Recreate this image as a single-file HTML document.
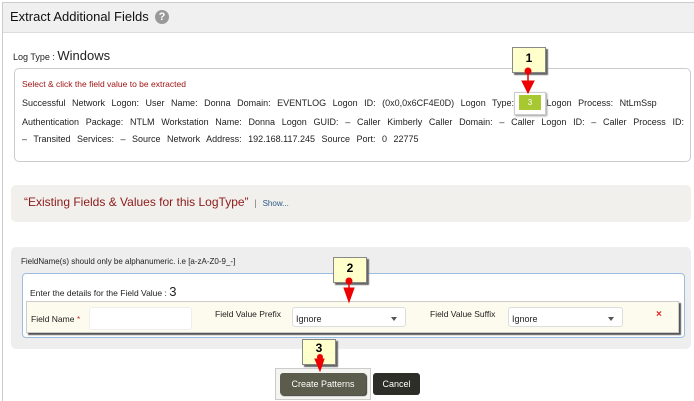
<!DOCTYPE html>
<html><head><style>
body{margin:0;width:694px;height:400px;background:#fff;font-family:"Liberation Sans",sans-serif;position:relative;overflow:hidden;font-size:9px;color:#222}
.a{position:absolute}
.call{position:absolute;width:32px;height:24px;background:#ffffcc;border:1px solid #888;box-shadow:2px 2px 1px #666;font:bold 12px "Liberation Sans",sans-serif;text-align:center;line-height:20px;color:#000}
.sel{position:absolute;height:20px;background:#fff;border:1px solid #ddd;border-radius:3px;font-size:9px;line-height:22px;padding-left:3px;box-sizing:border-box}
.sel:after{content:"";position:absolute;right:8px;top:9px;border:3px solid transparent;border-top:4px solid #555}
.ln{position:absolute;left:22px;white-space:nowrap;font-size:9px;word-spacing:4px}
</style></head><body>
<div class="a" style="left:2px;top:2px;width:692px;height:398px;border-left:1px solid #ccc;border-top:1px solid #ccc"></div>
<div class="a" style="left:3px;top:3px;width:691px;height:29px;background:#f0f0f0;border-bottom:1px solid #ddd"></div>
<div class="a" style="left:10px;top:9px;font-size:13px;color:#111">Extract Additional Fields</div>
<div class="a" style="left:155px;top:10px;width:14px;height:14px;border-radius:50%;background:#999;color:#fff;font-size:11px;font-weight:bold;text-align:center;line-height:14px">?</div>
<div class="a" style="left:13px;top:48px;font-size:9px">Log Type : <span style="font-size:13px">Windows</span></div>
<div class="a" style="left:14px;top:68px;width:675px;height:92px;border:1px solid #ccc;border-radius:5px"></div>
<div class="a" style="left:22px;top:79px;color:#a01515;font-size:8.5px">Select &amp; click the field value to be extracted</div>
<div class="ln" style="top:98px">Successful Network Logon: User Name: Donna Domain: EVENTLOG Logon ID: (0x0,0x6CF4E0D) Logon Type: <span style="display:inline-block;width:26px"></span>Logon Process: NtLmSsp</div>
<div class="ln" style="top:117px;width:662px;text-align:justify;text-align-last:justify;word-spacing:0">Authentication Package: NTLM Workstation Name: Donna Logon GUID: – Caller Kimberly Caller Domain: – Caller Logon ID: – Caller Process ID:</div>
<div class="ln" style="top:134px">– Transited Services: – Source Network Address: 192.168.117.245 Source Port: 0 22775</div>
<div class="a" style="left:514px;top:92px;width:30px;height:21px;background:#fff;border:1px solid #ccc;box-shadow:1px 1px 2px #999"></div>
<div class="a" style="left:519px;top:95px;width:22px;height:15px;background:#a8c832;color:#fff;font-size:8px;text-align:center;line-height:15px">3</div>
<div class="a" style="left:11px;top:185px;width:680px;height:37px;background:#f2f0ec;border-radius:5px"></div>
<div class="a" style="left:24px;top:195px;font-size:12px;color:#8b1a1a">“Existing Fields &amp; Values for this LogType” <span style="color:#777;font-size:9px">&nbsp;|&nbsp;</span> <span style="color:#2a5a8a;font-size:8px">Show...</span></div>
<div class="a" style="left:11px;top:247px;width:680px;height:102px;background:#eee;border-radius:5px"></div>
<div class="a" style="left:21px;top:257px;font-size:8px">FieldName(s) should only be alphanumeric. i.e [a-zA-Z0-9_-]</div>
<div class="a" style="left:22px;top:273px;width:661px;height:63px;background:#fff;border:1px solid #9bbde0;border-radius:4px"></div>
<div class="a" style="left:30px;top:284px;font-size:8.5px">Enter the details for the Field Value : <span style="font-size:13px">3</span></div>
<div class="a" style="left:26px;top:301px;width:651px;height:30px;background:#fdfbee;border:1px solid #ccc;box-shadow:2px 2px 1px #555"></div>
<div class="a" style="left:31px;top:314px;font-size:8.5px">Field Name <span style="color:#c33">*</span></div>
<div class="a" style="left:89px;top:307px;width:101px;height:21px;background:#fff;border:1px solid #eee;border-radius:3px"></div>
<div class="a" style="left:215px;top:309px;font-size:8.5px">Field Value Prefix</div>
<div class="sel" style="left:292px;top:307px;width:114px">Ignore</div>
<div class="a" style="left:430px;top:309px;font-size:8.5px">Field Value Suffix</div>
<div class="sel" style="left:508px;top:307px;width:115px">Ignore</div>
<div class="a" style="left:656px;top:309px;color:#d22;font-size:10px;font-weight:bold">×</div>
<div class="a" style="left:275px;top:368px;width:94px;height:30px;background:#f4f4f0;border:1px solid #ccc"></div>
<div class="a" style="left:280px;top:373px;width:86px;height:22px;background:#5c5c4c;border-radius:3px;color:#fff;font-size:9px;text-align:center;line-height:22px;box-shadow:1px 1px 1px #333">Create Patterns</div>
<div class="a" style="left:373px;top:373px;width:47px;height:22px;background:#2e2e28;border-radius:3px;color:#fff;font-size:9px;text-align:center;line-height:22px">Cancel</div>
<div class="call" style="left:512px;top:47px">1</div>
<div class="call" style="left:333px;top:257px">2</div>
<div class="call" style="left:302px;top:339px;line-height:16px">3</div>
<svg class="a" style="left:0;top:0" width="694" height="400">
<g fill="#e00" stroke="#e00">
<circle cx="528" cy="71" r="3"/><line x1="528" y1="71" x2="528" y2="85" stroke-width="1.5"/><polygon points="522,81 534,81 528,93"/>
<circle cx="349" cy="281" r="3"/><line x1="349" y1="281" x2="349" y2="292" stroke-width="1.5"/><polygon points="344,288 354,288 349,302"/>
<circle cx="320" cy="357" r="2.5"/><polygon points="315,359 324,359 320,371"/>
</g></svg>
</body></html>
